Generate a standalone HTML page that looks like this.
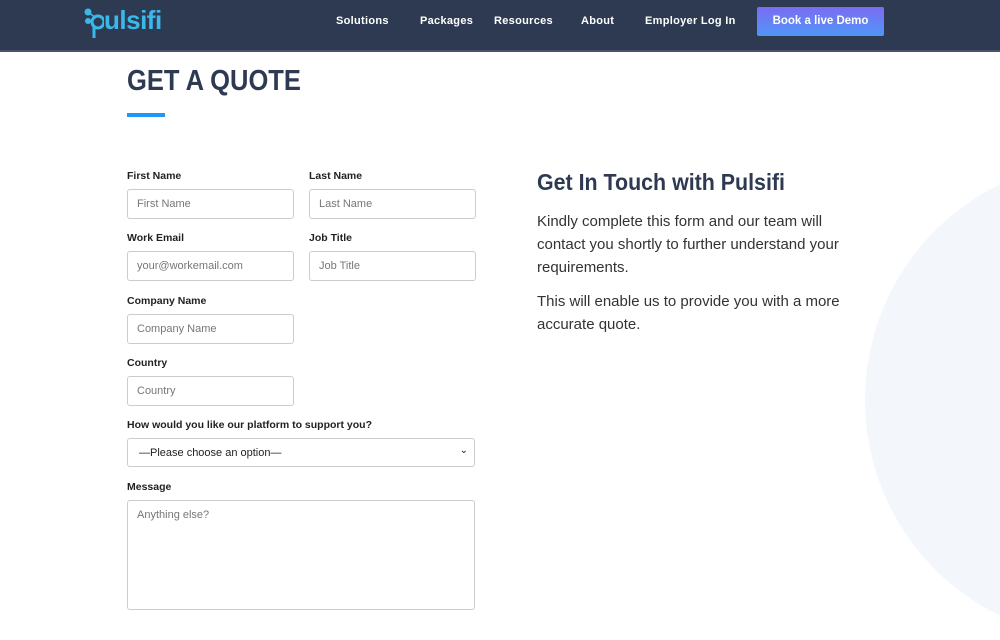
<!DOCTYPE html>
<html><head><style>
*{margin:0;padding:0;box-sizing:border-box}
body{width:1000px;height:600px;overflow:hidden;background:#fff;font-family:"Liberation Sans",sans-serif;position:relative}
.hdr{position:absolute;left:0;top:0;width:1000px;height:52px;background:#2d3a51;border-bottom:2px solid #46536b}
.nav{position:absolute;top:15px;color:#fff;font-weight:bold;font-size:11px;letter-spacing:.3px}
.btn{position:absolute;left:757px;top:7px;width:127px;height:29px;border-radius:2px;background:linear-gradient(180deg,#7b6cf2,#4f96f7);color:#fff;font-weight:bold;font-size:11.5px;text-align:center;line-height:29px}
.circle{position:absolute;left:865px;top:160px;width:480px;height:480px;border-radius:50%;background:#f3f7fb}
h1{position:absolute;left:127px;top:65px;font-size:29px;color:#2d3a51;font-weight:bold;transform:scaleX(.88);transform-origin:left top}
.bar{position:absolute;left:127px;top:113px;width:38px;height:4px;background:#2196f3}
.lbl{position:absolute;font-size:10.5px;font-weight:bold;color:#222}
.inp{position:absolute;width:167px;height:30px;border:1px solid #ccc;border-radius:3px;font-size:11px;color:#777;padding:8px 9px}
h2{position:absolute;left:537px;top:169px;font-size:23px;color:#2d3a51;font-weight:bold;transform:scaleX(.93);transform-origin:left top}
.p{position:absolute;left:537px;font-size:15px;color:#333;line-height:23px;width:330px}
</style></head><body>
<div class="hdr">
<svg style="position:absolute;left:84px;top:6px" width="20" height="34" viewBox="0 0 20 34"><circle cx="4" cy="6" r="3.5" fill="#3bb8ea"/><circle cx="4" cy="15" r="3" fill="#3bb8ea"/><circle cx="14" cy="16" r="6" fill="none" stroke="#3bb8ea" stroke-width="3"/><line x1="10" y1="20" x2="10" y2="32" stroke="#3bb8ea" stroke-width="3"/><line x1="4" y1="6" x2="12" y2="12" stroke="#3bb8ea" stroke-width="1.5"/></svg>
<div style="position:absolute;left:104px;top:5px;font-size:26px;font-weight:bold;color:#3bb8ea;letter-spacing:-.5px">ulsifi</div>
<div class="nav" style="left:336px">Solutions</div>
<div class="nav" style="left:420px">Packages</div>
<div class="nav" style="left:494px">Resources</div>
<div class="nav" style="left:581px">About</div>
<div class="nav" style="left:645px">Employer Log In</div>
<div class="btn">Book a live Demo</div>
</div>
<div class="circle"></div>
<h1>GET A QUOTE</h1><div class="bar"></div>
<div class="lbl" style="left:127px;top:170px">First Name</div><div class="lbl" style="left:309px;top:170px">Last Name</div>
<div class="inp" style="left:127px;top:189px">First Name</div><div class="inp" style="left:309px;top:189px">Last Name</div>
<div class="lbl" style="left:127px;top:232px">Work Email</div><div class="lbl" style="left:309px;top:232px">Job Title</div>
<div class="inp" style="left:127px;top:251px">your@workemail.com</div><div class="inp" style="left:309px;top:251px">Job Title</div>
<div class="lbl" style="left:127px;top:295px">Company Name</div>
<div class="inp" style="left:127px;top:314px">Company Name</div>
<div class="lbl" style="left:127px;top:357px">Country</div>
<div class="inp" style="left:127px;top:376px">Country</div>
<div class="lbl" style="left:127px;top:419px">How would you like our platform to support you?</div>
<div class="inp" style="left:127px;top:438px;width:348px;height:29px;color:#222;padding-left:11px">—Please choose an option—<span style="position:absolute;right:6px;top:6px;font-size:10px">&#8964;</span></div>
<div class="lbl" style="left:127px;top:481px">Message</div>
<div class="inp" style="left:127px;top:500px;width:348px;height:110px">Anything else?</div>
<h2>Get In Touch with Pulsifi</h2>
<div class="p" style="top:210px">Kindly complete this form and our team will contact you shortly to further understand your requirements.</div>
<div class="p" style="top:290px">This will enable us to provide you with a more accurate quote.</div>
</body></html>
